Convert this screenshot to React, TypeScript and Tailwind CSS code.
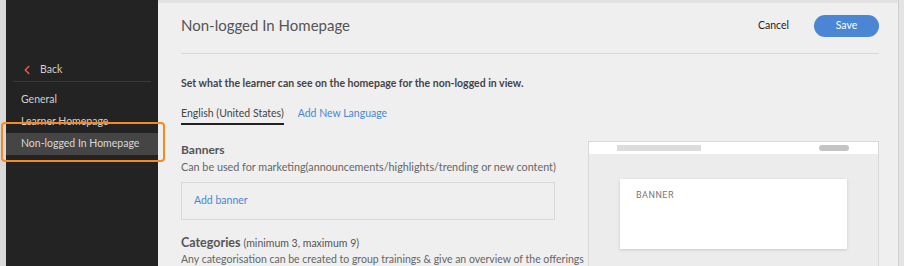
import { ChevronLeft } from 'lucide-react'

const navItems = ['General', 'Learner Homepage', 'Non-logged In Homepage']

export default function App() {
  const active = 'Non-logged In Homepage'

  return (
    <div
      className="relative flex h-[266px] w-[904px] overflow-hidden bg-[#efefef] text-[#444]"
      style={{ fontFamily: 'Lato, "Noto Sans", sans-serif' }}
    >
      <div className="w-[6px] shrink-0 bg-[#d9d9d9]" />

      {/* Sidebar */}
      <aside className="w-[152px] shrink-0 bg-[#232323] pt-[62px]">
        <div className="mx-[7px] flex items-center gap-[6px] border-b border-[#3a3a3a] pb-[3px] pl-[7px] text-[10.5px] text-[#cfcfcf]">
          <ChevronLeft className="h-[14px] w-[14px] text-[#e8603c]" strokeWidth={2.5} />
          <span>Back</span>
        </div>
        <nav className="mt-[7px]">
          {navItems.map((item) => (
            <div
              key={item}
              className={`flex h-[22px] items-center pl-[15px] text-[10.5px] ${
                item === active ? 'bg-[#454545] text-[#d8d8d8]' : 'text-[#cfcfcf]'
              }`}
            >
              {item}
            </div>
          ))}
        </nav>
      </aside>

      {/* Main */}
      <main className="min-w-0 flex-1 border-t-[3px] border-[#e2e2e2] pl-[23px] pr-[19px]">
        <div className="flex h-[51px] items-center justify-between border-b border-[#d8d8d8] pb-[5px]">
          <h1 className="text-[15px] text-[#555]">Non-logged In Homepage</h1>
          <div className="flex items-center gap-[25px]">
            <button className="text-[10.5px] text-[#222]">Cancel</button>
            <button className="h-[22px] w-[65px] rounded-full bg-[#4a86d4] text-[10.5px] text-white">
              Save
            </button>
          </div>
        </div>

        <p className="mt-[22px] text-[10.5px] font-bold text-[#444]">
          Set what the learner can see on the homepage for the non-logged in view.
        </p>

        <div className="mt-[14px] flex items-start gap-[14px] text-[10.5px]">
          <span className="border-b-2 border-[#222] pb-[1px] text-[#444]">English (United States)</span>
          <span className="text-[#4a86d4]">Add New Language</span>
        </div>

        <div className="mt-[16px] flex gap-[4px]">
          <div className="min-w-0 flex-1">
            <h2 className="text-[12px] font-bold text-[#555]">Banners</h2>
            <p className="text-[10.8px] text-[#666]">
              Can be used for marketing(announcements/highlights/trending or new content)
            </p>
            <div className="mt-[7px] flex h-[38px] w-[374px] items-center border border-[#d8d8d8] pl-[12px] text-[10.5px] text-[#4a86d4]">
              Add banner
            </div>
            <h2 className="mt-[14px] text-[12.5px] font-bold text-[#555]">
              Categories <span className="text-[10.5px] font-normal">(minimum 3, maximum 9)</span>
            </h2>
            <p className="whitespace-nowrap text-[10.5px] text-[#666]">
              Any categorisation can be created to group trainings &amp; give an overview of the offerings
            </p>
          </div>

          {/* Preview */}
          <div className="h-[140px] w-[291px] shrink-0 border border-[#d8d8d8] bg-[#ececec]">
            <div className="flex h-[12px] items-center justify-between bg-white pl-[28px] pr-[29px]">
              <div className="h-[6px] w-[84px] bg-[#dcdcdc]" />
              <div className="h-[6px] w-[30px] rounded-full bg-[#c4c4c4]" />
            </div>
            <div className="mx-auto mt-[25px] h-[70px] w-[227px] bg-white px-[16px] pt-[11px] text-[9px] leading-none shadow-[0_1px_3px_rgba(0,0,0,0.15)]">
              <span
                className="tracking-[0.5px] text-[#777]"
                style={{ fontFamily: 'Roboto, sans-serif' }}
              >
                BANNER
              </span>
            </div>
          </div>
        </div>
      </main>

      <div className="w-[6px] shrink-0 border-l border-[#cfcfcf] bg-[#e4e4e4]" />

      {/* highlight annotation */}
      <div className="pointer-events-none absolute left-[1px] top-[122px] h-[40px] w-[164px] rounded-[4px] border-2 border-[#f7891f]" />
    </div>
  )
}
